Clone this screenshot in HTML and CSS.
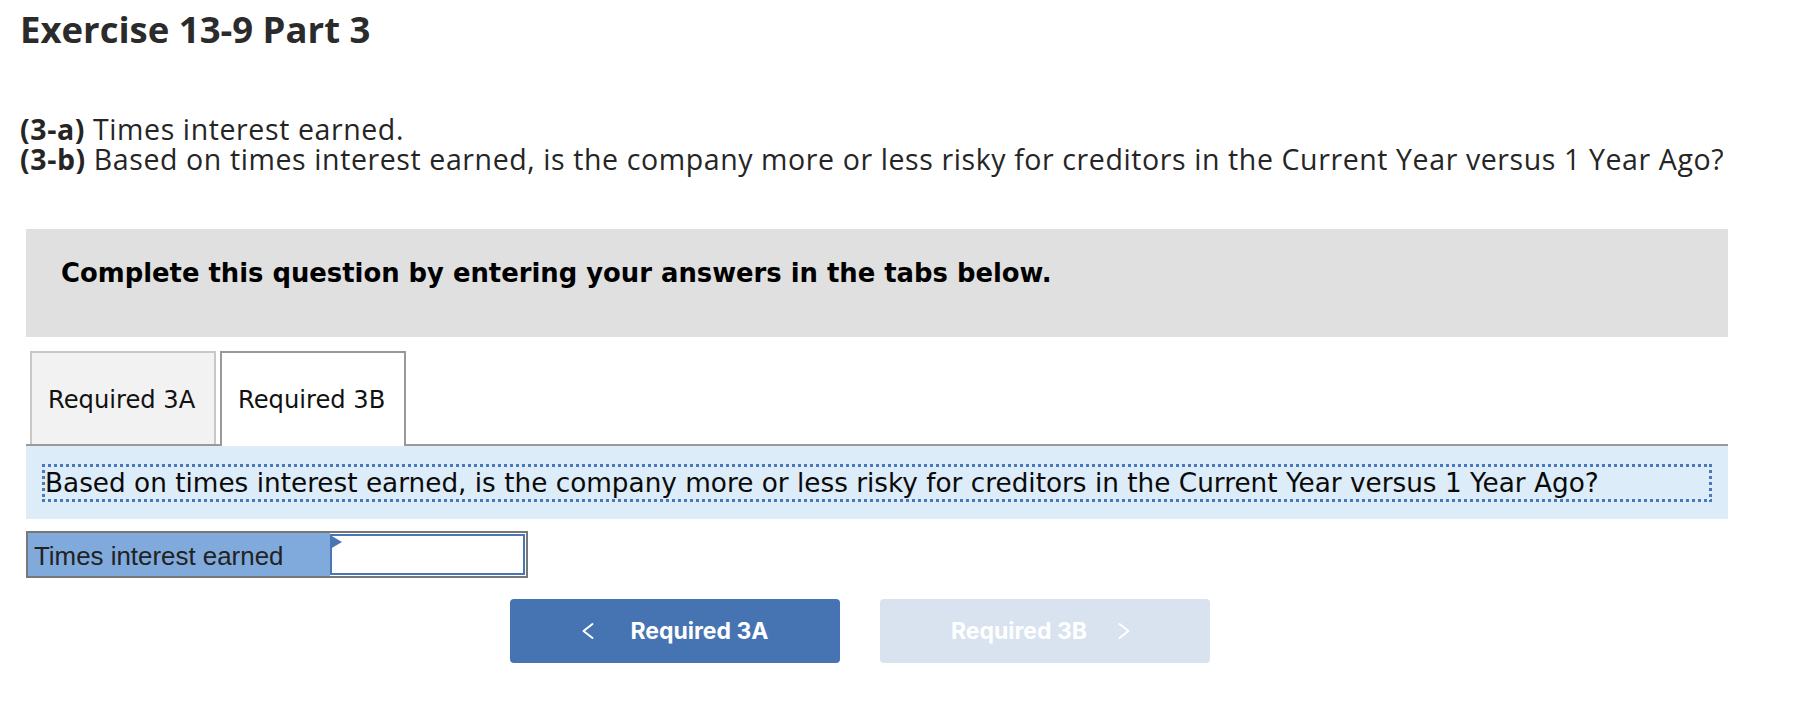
FILE: index.html
```html
<!DOCTYPE html>
<html lang="en">
<head>
<meta charset="utf-8">
<title>Exercise 13-9 Part 3</title>
<link rel="stylesheet" href="styles.css">
</head>
<body>
<div class="page">
  <h1 class="title">Exercise 13-9 Part 3</h1>
  <div class="intro">
    <p class="intro-line"><b>(3-a)</b> Times interest earned.</p>
    <p class="intro-line"><b>(3-b)</b> Based on times interest earned, is the company more or less risky for creditors in the Current Year versus 1 Year Ago?</p>
  </div>
  <div class="notice">Complete this question by entering your answers in the tabs below.</div>
  <div class="tabs">
    <div class="tab">Required 3A</div>
    <div class="tab tab-active">Required 3B</div>
  </div>
  <div class="panel">
    <div class="question">Based on times interest earned, is the company more or less risky for creditors in the Current Year versus 1 Year Ago?</div>
  </div>
  <div class="answer-row">
    <div class="answer-label">Times interest earned</div>
    <div class="answer-cell">
      <span class="flag"></span>
      <input class="answer-input" type="text" aria-label="Times interest earned">
    </div>
  </div>
  <div class="nav">
    <button class="nav-btn nav-prev" type="button">
      <svg class="chev" width="14" height="18" viewBox="0 0 14 18"><path d="M11.5 2 L2.5 9 L11.5 16" fill="none" stroke="#fff" stroke-width="2" stroke-linecap="round" stroke-linejoin="round"/></svg>
      <span>Required 3A</span>
    </button>
    <button class="nav-btn nav-next" type="button">
      <span>Required 3B</span>
      <svg class="chev" width="14" height="18" viewBox="0 0 14 18"><path d="M2.5 2 L11.5 9 L2.5 16" fill="none" stroke="#fff" stroke-width="2" stroke-linecap="round" stroke-linejoin="round"/></svg>
    </button>
  </div>
</div>
</body>
</html>
```

FILE: styles.css
```css
html, body {
  margin: 0;
  padding: 0;
  background: #ffffff;
}

.page {
  padding-left: 20px;
  width: 1708px;
}

.title {
  margin: 8px 0 0 0;
  font-family: "Open Sans", Lato, sans-serif;
  font-weight: 700;
  font-size: 36.5px;
  line-height: 43px;
  color: #2b2b2b;
}

.intro {
  margin-top: 63px;
  font-family: "Open Sans", Lato, sans-serif;
  font-size: 28.5px;
  letter-spacing: 0.6px;
  line-height: 30px;
  color: #252525;
}

.intro-line {
  margin: 0;
  white-space: nowrap;
}

.notice {
  margin-top: 55px;
  margin-left: 6px;
  width: 1702px;
  height: 108px;
  box-sizing: border-box;
  padding: 29px 0 0 35px;
  background: #e0e0e0;
  font-family: "DejaVu Sans", Verdana, sans-serif;
  font-weight: 700;
  font-size: 25.85px;
  line-height: 30px;
  color: #000000;
}

.tabs {
  margin-top: 14px;
  margin-left: 6px;
  width: 1702px;
  display: flex;
  gap: 4px;
  padding-left: 4px;
  box-sizing: border-box;
  border-bottom: 2px solid #999999;
}

.tab {
  width: 186px;
  height: 93px;
  box-sizing: border-box;
  border: 2px solid #c8c8c8;
  border-bottom: none;
  background: #f2f2f2;
  display: flex;
  align-items: center;
  padding: 2px 0 0 16px;
  font-family: "DejaVu Sans", Verdana, sans-serif;
  font-size: 24.2px;
  color: #111111;
}

.tab-active {
  background: #ffffff;
  border-color: #999999;
  height: 95px;
  margin-bottom: -2px;
  padding-bottom: 2px;
}

.panel {
  margin-left: 6px;
  width: 1702px;
  box-sizing: border-box;
  padding: 18px 16px 17px 16px;
  background: #ddecf9;
}

.question {
  height: 38px;
  box-sizing: border-box;
  padding: 3px 3px 3px 3px;
  background-image:
    repeating-linear-gradient(to right, #4a78b8 0 3px, transparent 3px 6px),
    repeating-linear-gradient(to right, #4a78b8 0 3px, transparent 3px 6px),
    repeating-linear-gradient(to bottom, #4a78b8 0 3px, transparent 3px 6px),
    repeating-linear-gradient(to bottom, #4a78b8 0 3px, transparent 3px 6px);
  background-size: 100% 3px, 100% 3px, 3px 100%, 3px 100%;
  background-position: left top, left bottom, left top, right top;
  background-repeat: no-repeat;
  font-family: "DejaVu Sans", Verdana, sans-serif;
  font-size: 26.3px;
  line-height: 32px;
  color: #0a0a0a;
  white-space: nowrap;
}

.answer-row {
  margin-top: 12px;
  margin-left: 6px;
  width: 502px;
  height: 47px;
  box-sizing: border-box;
  border: 2px solid #777777;
  display: flex;
}

.answer-label {
  flex: 0 0 302px;
  background: #80aadc;
  display: flex;
  align-items: center;
  padding: 3px 0 0 6px;
  box-sizing: border-box;
  white-space: nowrap;
  font-family: "Liberation Sans", Arial, sans-serif;
  font-size: 25.9px;
  color: #222222;
}

.answer-cell {
  flex: 1 1 0;
  min-width: 0;
  position: relative;
  padding: 1px 1px 1px 0;
  background: #ffffff;
  display: flex;
}

.answer-input {
  flex: 1 1 0;
  width: 0;
  min-width: 0;
  margin: 0;
  border: 2px solid #4a76b7;
  background: #ffffff;
  outline: none;
  padding: 0 6px;
  font-family: "Liberation Sans", Arial, sans-serif;
  font-size: 22px;
}

.flag {
  position: absolute;
  left: 0;
  top: 2px;
  width: 0;
  height: 0;
  border-top: 7px solid transparent;
  border-bottom: 7px solid transparent;
  border-left: 12px solid #4a76b7;
}

.nav {
  margin-top: 21px;
  padding-left: 490px;
  display: flex;
  gap: 40px;
}

.nav-btn {
  width: 330px;
  height: 64px;
  box-sizing: border-box;
  border: none;
  border-radius: 4px;
  display: flex;
  align-items: center;
  justify-content: center;
  gap: 35px;
  padding: 0;
  font-family: Inter, Roboto, sans-serif;
  font-weight: 700;
  font-size: 23px;
  color: #ffffff;
  cursor: pointer;
}

.nav-prev {
  background: #4674b2;
}

.nav-next {
  background: #d9e3ef;
  gap: 30px;
  padding-right: 8px;
  cursor: default;
}

.chev {
  display: block;
}
```
